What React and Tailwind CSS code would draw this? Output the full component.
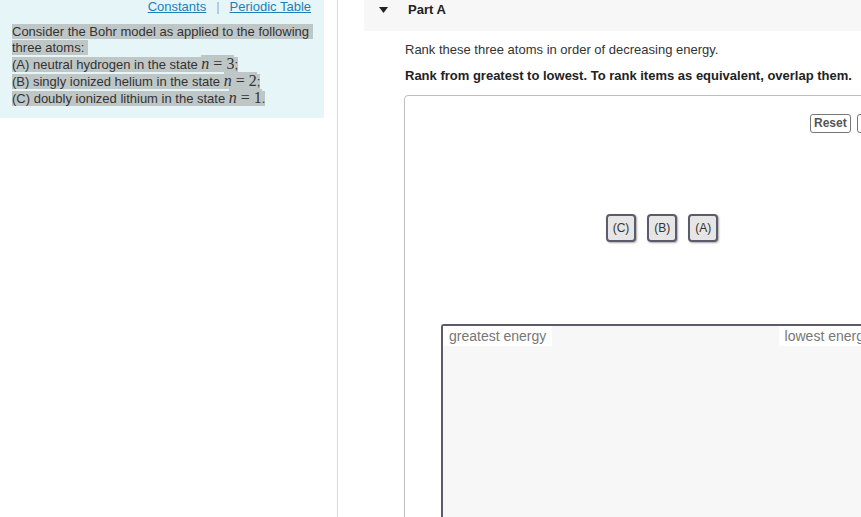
import { RotateCcw } from 'lucide-react';

const hl = 'bg-[#bfc6c6]';

const MathN = ({ value, tail }) => (
  <>
    <span className={hl}> </span>
    <span className={`${hl} font-['Liberation_Serif',serif] text-[16px] italic`}>n</span>
    <span className={`${hl} font-['Liberation_Serif',serif] text-[16px]`}> = {value}</span>
    <span className={hl}>{tail}</span>
  </>
);

const Tile = ({ label }) => (
  <div className="flex h-[28px] items-center justify-center rounded-[4px] border-2 border-[#5b5b6b] bg-[#e6e6e6] px-[5px] text-[12px] text-[#333] shadow-[1px_1px_2px_rgba(0,0,0,0.35)]">
    {label}
  </div>
);

export default function App() {
  return (
    <div className="flex h-[517px] w-[861px] overflow-hidden bg-white font-['Liberation_Sans',Arial,sans-serif] text-[13px]">
      {/* left info panel */}
      <div className="w-[324px] shrink-0">
        <div className="h-[118px] bg-[#e6f6f8] pl-[12px] pr-[13px]">
          <div className="flex justify-end gap-[10px] leading-[14px] text-[#1d7fb8]">
            <span className="underline">Constants</span>
            <span className="text-[#aaa]">|</span>
            <span className="underline">Periodic Table</span>
          </div>
          <div className="mt-[10px] whitespace-pre leading-[16px] text-[#333]">
            <div><span className={hl}>Consider the Bohr model as applied to the following </span></div>
            <div><span className={hl}>three atoms: </span></div>
            <div>
              <span className={hl}>(A) neutral hydrogen in the state</span>
              <MathN value="3" tail=";" />
            </div>
            <div>
              <span className={hl}>(B) singly ionized helium in the state</span>
              <MathN value="2" tail=";" />
            </div>
            <div>
              <span className={hl}>(C) doubly ionized lithium in the state</span>
              <MathN value="1" tail="." />
            </div>
          </div>
        </div>
      </div>

      {/* divider */}
      <div className="ml-[13px] w-px shrink-0 bg-[#d2dbe4]" />

      {/* right: part A */}
      <div className="ml-[26px] flex min-w-0 flex-1 flex-col">
        <div className="flex h-[31px] shrink-0 items-center bg-[#f7f7f7] pb-[13px] pt-[1px]">
          <svg className="ml-[15px]" width="9" height="6" viewBox="0 0 9 6">
            <path d="M0 0 L9 0 L4.5 6 Z" fill="#222" />
          </svg>
          <span className="ml-[20px] font-bold text-[#222]">Part A</span>
        </div>

        <div className="pl-[40px]">
          <p className="mt-[11px] pl-[1px] leading-[16px] text-[#333]">Rank these three atoms in order of decreasing energy.</p>
          <p className="mt-[10px] pl-[1px] leading-[16px] font-bold text-[#222]">
            Rank from greatest to lowest. To rank items as equivalent, overlap them.
          </p>

          <div className="mt-[11px] h-[440px] w-[514px] rounded-[4px] border border-[#bdbdbd] pt-[18px]">
            <div className="flex gap-[6px] pl-[405px]">
              <button className="h-[19px] rounded-[3px] border border-[#777] px-[3px] text-[12px] font-bold leading-[15px] text-[#555]">
                Reset
              </button>
              <button className="flex h-[19px] items-center gap-[3px] rounded-[3px] border border-[#777] px-[4px] text-[12px] font-bold text-[#555]">
                <RotateCcw className="h-3 w-3" />
                Help
              </button>
            </div>

            <div className="mt-[81px] flex justify-center gap-[11px] pl-[2px]">
              <Tile label="(C)" />
              <Tile label="(B)" />
              <Tile label="(A)" />
            </div>

            <div className="ml-[36px] mt-[82px] h-[200px] w-[440px] rounded-tl-[3px] border-l-2 border-t-2 border-[#5b5b6b] bg-[#f7f7f7]">
              <div className="flex justify-between text-[14px]">
                <span className="bg-white px-[6px] leading-[20px] text-[#777]">greatest energy</span>
                <span className="mr-[4px] bg-white px-[6px] leading-[20px] text-[#777]">lowest energy</span>
              </div>
            </div>
          </div>
        </div>
      </div>
    </div>
  );
}
